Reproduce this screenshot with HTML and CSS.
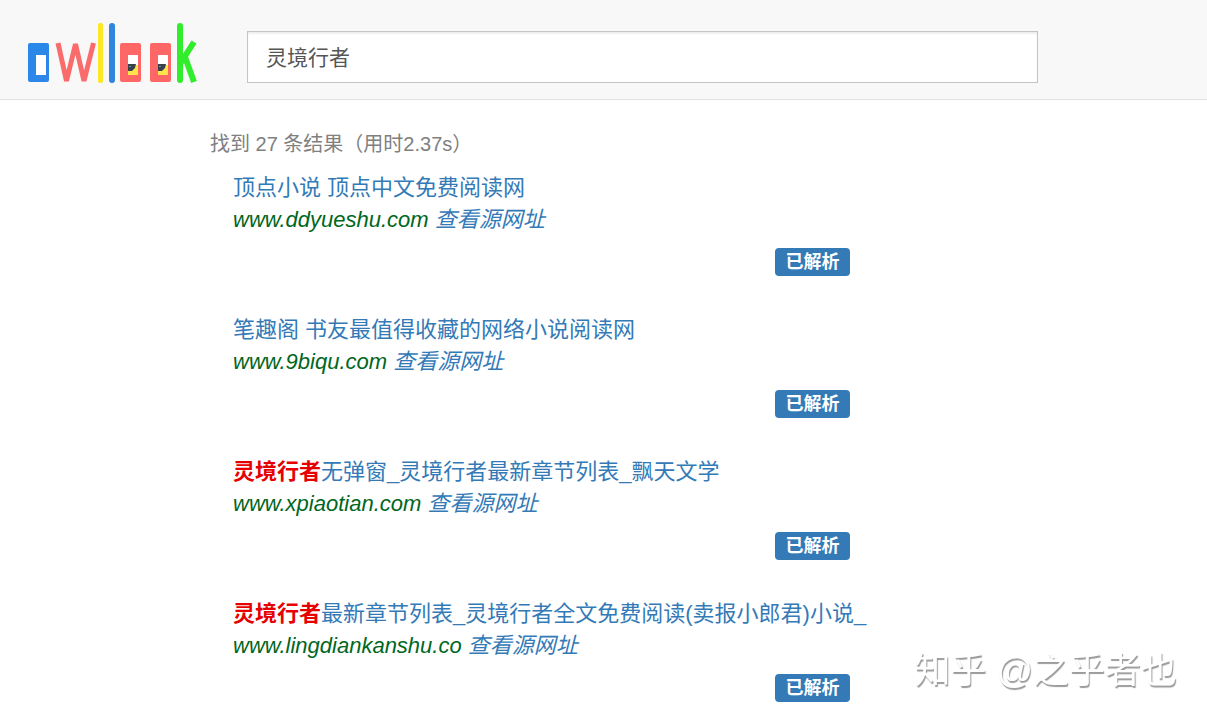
FILE: index.html
```html
<!DOCTYPE html>
<html lang="zh-CN">
<head>
<meta charset="utf-8">
<title>灵境行者 - owllook</title>
<meta name="viewport" content="width=device-width, initial-scale=1">
<link rel="stylesheet" href="styles.css">
</head>
<body>

<header class="navbar">
	<a class="logo" href="/" aria-label="owllook">
		<svg width="170" height="62" viewBox="0 0 170 62" aria-hidden="true">
			<!-- o -->
			<path fill="#2b87e8" fill-rule="evenodd" d="M3 21h17a2 2 0 0 1 2 2v35a2 2 0 0 1-2 2H3a2 2 0 0 1-2-2V23a2 2 0 0 1 2-2zM9 33v20h10V33z"/>
			<path fill="#fff" d="M9 33h10v20H9z"/>
			<!-- w -->
			<path fill="none" stroke="#fa6c6c" stroke-width="5" stroke-linejoin="bevel" d="M31 21l8.500 38 9-37 8.500 37 9.500-38"/>
			<!-- ll -->
			<rect x="71" y="1" width="5" height="60" rx="2" fill="#fde725"/>
			<rect x="82" y="1" width="6" height="60" rx="3" fill="#2f86dc"/>
			<!-- oo -->
			<g id="eye">
				<rect x="93" y="21" width="21" height="39" rx="2" fill="#ff6767"/>
				<path fill="#fff" d="M101 33h10v20h-10z"/>
				<path fill="#ffe34a" d="M101 43h10v10h-10z"/>
				<path fill="#38424c" d="M101 42h8l-1 4-3 3h-4z"/>
				<path fill="#7c8590" d="M102 44h2v1h-2z"/>
			</g>
			<use href="#eye" x="30"/>
			<!-- k -->
			<path fill="none" stroke="#31ed2b" stroke-width="6" stroke-linecap="round" d="M153 4v54"/>
			<path fill="none" stroke="#31ed2b" stroke-width="6" d="M153 42l14-22M158 35l9 25"/>
		</svg>
	</a>
	<form class="search" action="/search">
		<input type="text" class="search-input" name="wd" value="灵境行者" aria-label="小说搜索">
	</form>
</header>

<main class="container">
	<p class="result-info">找到 27 条结果（用时2.37s）</p>

	<ul class="result-list">
		<li class="result-item">
			<a class="result-title" href="#">顶点小说 顶点中文免费阅读网</a>
			<p class="result-url">www.ddyueshu.com <a href="#">查看源网址</a></p>
			<span class="label">已解析</span>
		</li>
		<li class="result-item">
			<a class="result-title" href="#">笔趣阁 书友最值得收藏的网络小说阅读网</a>
			<p class="result-url">www.9biqu.com <a href="#">查看源网址</a></p>
			<span class="label">已解析</span>
		</li>
		<li class="result-item">
			<a class="result-title" href="#"><b>灵境行者</b>无弹窗_灵境行者最新章节列表_飘天文学</a>
			<p class="result-url">www.xpiaotian.com <a href="#">查看源网址</a></p>
			<span class="label">已解析</span>
		</li>
		<li class="result-item">
			<a class="result-title" href="#"><b>灵境行者</b>最新章节列表_灵境行者全文免费阅读(卖报小郎君)小说_</a>
			<p class="result-url">www.lingdiankanshu.co <a href="#">查看源网址</a></p>
			<span class="label">已解析</span>
		</li>
	</ul>
</main>

<div class="watermark">知乎 @之乎者也</div>

</body>
</html>
```
FILE: styles.css
```css
* {
	box-sizing: border-box;
}

body {
	margin: 0;
	background: #fff;
	color: #333;
	font-family: "Liberation Sans", "Noto Sans CJK SC", sans-serif;
	font-size: 22px;
	line-height: 32px;
}

a {
	color: #337ab7;
	text-decoration: none;
}

.navbar {
	display: flex;
	align-items: center;
	gap: 50px;
	height: 100px;
	padding: 14px 14% 0 27px;
	background: #f8f8f8;
	border-bottom: 1px solid #e2e2e2;
}

.logo {
	display: flex;
	flex: none;
	margin-bottom: 8px;
}

.search {
	flex: 1;
}

.search-input {
	display: block;
	width: 100%;
	height: 52px;
	padding: 0 18px 2px;
	border: 1px solid #c4c4c4;
	border-radius: 0;
	background: #fff;
	box-shadow: inset 0 2px 2px rgba(0, 0, 0, .07);
	color: #555;
	font-family: inherit;
	font-size: 21px;
}

.container {
	max-width: 872px;
	padding: 28px 0 0 210px;
}

.result-info {
	margin: 0 0 12px;
	color: #808080;
	font-size: 20px;
}

.result-list {
	margin: 0;
	padding: 0 0 0 23px;
	list-style: none;
}

.result-item {
	display: flex;
	flex-direction: column;
	margin-bottom: 38px;
}

	.result-title {
		overflow: hidden;
		white-space: nowrap;
	}

	.result-title b {
		color: #e60000;
	}

	.result-url {
		margin: 0 0 12px;
		color: #006621;
		font-style: italic;
	}

.label {
	align-self: flex-end;
	min-width: 75px;
	margin-right: 22px;
	padding: 0 10px;
	border-radius: 4px;
	background: #337ab7;
	color: #fff;
	font-size: 18px;
	font-weight: bold;
	line-height: 28px;
	text-align: center;
}

.watermark {
	position: fixed;
	right: 30px;
	bottom: 24px;
	color: #fff;
	font-size: 36px;
	line-height: 50px;
	text-shadow: 1px 2px 1px rgba(0, 0, 0, .4);
	pointer-events: none;
}
```
